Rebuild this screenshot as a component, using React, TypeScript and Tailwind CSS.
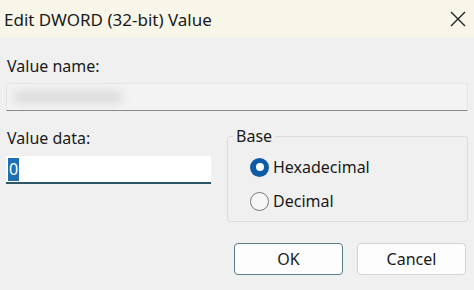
import React from "react";

export default function App() {
  const font = { fontFamily: '"Noto Sans", "Open Sans", sans-serif' };
  return (
    <div className="w-[474px] h-[290px] bg-[#f0f0f0] text-[#1a1a1a] overflow-hidden" style={font}>
      <div className="h-[38px] bg-[#f7f6e9] flex items-center justify-between pl-[4px] pr-[7px]">
        <span className="text-[17px] leading-none">Edit DWORD (32-bit) Value</span>
        <svg width="18" height="18" viewBox="0 0 18 18">
          <path d="M2 2 L16 16 M16 2 L2 16" stroke="#222" strokeWidth="1.4" fill="none" />
        </svg>
      </div>
      <div className="px-[6px]">
        <div className="pt-[16px] pl-[1px] text-[16px] leading-[24px]">Value name:</div>
        <div className="mt-[5px] h-[28px] w-[462px] bg-[#f3f3f3] border border-[#e4e4e4] border-b-[#8c8c8c] rounded-t-[3px] relative overflow-hidden">
          <div className="absolute left-[6px] top-[6px] w-[110px] h-[14px] bg-[#dedede] blur-[4px] rounded-full" />
        </div>
        <div className="flex mt-[24px]">
          <div className="w-[221px]">
            <div className="pl-[1px] text-[16px] leading-[24px] -mt-[9px]">Value data:</div>
            <div className="mt-[6px] h-[28px] w-[205px] bg-white border-b-2 border-[#2b5569] flex items-center pl-[2px]">
              <span className="bg-[#1f6fb5] text-white text-[16px] leading-[23px] px-[1px]">0</span>
            </div>
          </div>
          <fieldset className="w-[241px] h-[96px] border border-[#dcdcdc] rounded-[3px] -mt-[9px]">
            <legend className="ml-[5px] px-[3px] text-[16px] leading-[20px]">Base</legend>
            <div className="pl-[22px]">
              <label className="flex items-center gap-[4px] mt-[10px] text-[16px] leading-[22px]">
                <span className="w-[19px] h-[19px] rounded-full bg-[#0f5ca6] flex items-center justify-center">
                  <span className="w-[8px] h-[8px] rounded-full bg-white" />
                </span>
                Hexadecimal
              </label>
              <label className="flex items-center gap-[4px] mt-[12px] text-[16px] leading-[22px]">
                <span className="w-[19px] h-[19px] rounded-full border border-[#7a7a7a] bg-[#f7f7f7]" />
                Decimal
              </label>
            </div>
          </fieldset>
        </div>
        <div className="flex justify-end gap-[14px] mt-[21px] pr-[2px]">
          <button className="w-[109px] h-[32px] rounded-[4px] bg-[#fdfdfd] border border-[#5d7b8a] text-[16px]">OK</button>
          <button className="w-[109px] h-[32px] rounded-[4px] bg-[#fdfdfd] border border-[#d3d3d3] text-[16px]">Cancel</button>
        </div>
      </div>
    </div>
  );
}
